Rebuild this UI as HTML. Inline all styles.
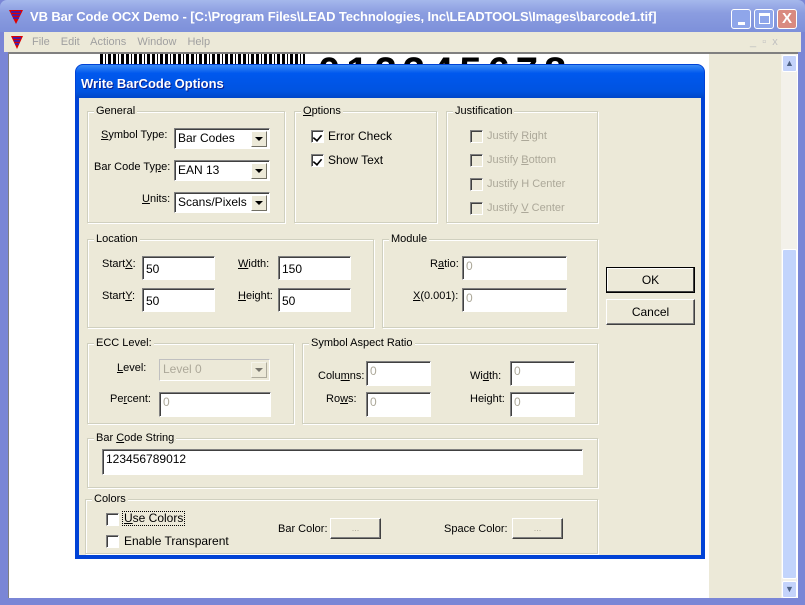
<!DOCTYPE html>
<html><head><meta charset="utf-8"><style>
*{margin:0;padding:0;box-sizing:border-box}
body{width:805px;height:605px;position:relative;overflow:hidden;background:#7a86d6;font-family:"Liberation Sans",sans-serif;font-size:11px;color:#000}
.a{position:absolute}
.grp{position:absolute;border:1px solid #d0d0bf;box-shadow:inset 1px 1px 0 #fff,1px 1px 0 #fff}
.grp>span{position:absolute;top:-8px;left:6px;background:#ece9d8;padding:0 2px;line-height:14px}
.ed{position:absolute;background:#fff;border:1px solid;border-color:#808080 #fff #fff #808080;box-shadow:inset 1px 1px 0 #404040;padding:2px 0 0 3px;line-height:14px;font-size:12px}
.dis{color:#aca899}
.lbl{position:absolute;line-height:13px;white-space:nowrap}
.cb{position:absolute;width:13px;height:13px;background:#fff;border:1px solid;border-color:#808080 #fff #fff #808080;box-shadow:inset 1px 1px 0 #404040}
.cb.d{background:#ece9d8}
.chk::after{content:"";position:absolute;left:2px;top:1px;width:5px;height:8px;border:solid #000;border-width:0 2px 2px 0;transform:rotate(40deg) scale(.8)}
.dd{position:absolute;right:2px;top:2px;width:16px;height:16px;background:#ece9d8;border:1px solid;border-color:#fff #716f64 #716f64 #fff}
.dd::after{content:"";position:absolute;left:3px;top:5px;border:4px solid transparent;border-top:4px solid #000}
.btn{position:absolute;background:#ece9d8;border:1px solid;border-color:#fff #404040 #404040 #fff;box-shadow:inset -1px -1px 0 #808080;text-align:center;font-size:12px}
u{text-decoration:underline}
</style></head><body>
<div class="a" style="left:0;top:0;width:805px;height:32px;background:linear-gradient(#a5b8ec,#8b9de0 40%,#7d90da);border-radius:7px 7px 0 0"></div>
<svg class="a" style="left:8px;top:9px" width="16" height="16"><polygon points="1,1 15,1 8,15" fill="#d00"/><path d="M3 3h10M4 6h8M5 9h6" stroke="#22c" stroke-width="1.5"/></svg>
<div class="a" style="left:30px;top:9px;color:#fff;font-size:13px;font-weight:bold;line-height:16px;white-space:nowrap;letter-spacing:-.1px">VB Bar Code OCX Demo - [C:\Program Files\LEAD Technologies, Inc\LEADTOOLS\Images\barcode1.tif]</div>
<div class="a" style="left:731px;top:9px;width:20px;height:20px;background:#8fa6ea;border:1px solid #fff;border-radius:3px"><div class="a" style="left:6px;top:12px;width:7px;height:3px;background:#fff"></div></div>
<div class="a" style="left:754px;top:9px;width:20px;height:20px;background:#8fa6ea;border:1px solid #fff;border-radius:3px"><div class="a" style="left:4px;top:3px;width:11px;height:11px;border:1px solid #fff;border-top-width:3px"></div></div>
<div class="a" style="left:777px;top:9px;width:20px;height:20px;background:#d98a80;border:1px solid #fff;border-radius:3px;color:#fff;font-weight:bold;font-size:15px;text-align:center;line-height:17px">X</div>
<div class="a" style="left:4px;top:32px;width:797px;height:20px;background:#ece9d8"></div>
<svg class="a" style="left:10px;top:35px" width="14" height="15"><polygon points="1,1 13,1 7,14" fill="#d00"/><path d="M3 3h8M4 6h6M5 9h4" stroke="#22c" stroke-width="1.5"/></svg>
<div class="a" style="left:32px;top:36px;color:#a0a0a0;font-size:11px;word-spacing:8px;white-space:nowrap">File Edit Actions Window Help</div>
<div class="a" style="left:750px;top:36px;color:#c0c0c0;font-size:11px;white-space:nowrap">_ &nbsp;▫ &nbsp;x</div>
<div class="a" style="left:8px;top:52px;width:790px;height:546px;background:#fff;border-top:2px solid #808080;border-left:1px solid #808080"></div>
<div class="a" style="left:709px;top:54px;width:72px;height:544px;background:#ece9d8"></div>
<div class="a" style="left:781px;top:54px;width:16px;height:544px;background:#f3f1ea"></div>
<div class="a" style="left:782px;top:55px;width:15px;height:17px;background:#c4d3fb;border:1px solid #fff;border-radius:2px;color:#4d6185;text-align:center;font-size:9px;line-height:15px">▲</div>
<div class="a" style="left:782px;top:249px;width:15px;height:330px;background:#c2d4fc;border:1px solid #fff;border-radius:2px"></div>
<div class="a" style="left:782px;top:581px;width:15px;height:17px;background:#c4d3fb;border:1px solid #fff;border-radius:2px;color:#4d6185;text-align:center;font-size:9px;line-height:15px">▼</div>
<div class="a" style="left:100px;top:54px;width:205px;height:14px;background:repeating-linear-gradient(90deg,#000 0 3px,#fff 3px 5px,#000 5px 6px,#fff 6px 8px,#000 8px 11px,#fff 11px 13px)"></div>
<div class="a" style="left:318px;top:54px;width:250px;height:14px;overflow:hidden"><div style="font-size:40px;font-weight:bold;line-height:40px;margin-top:-2px;letter-spacing:6px;white-space:nowrap">0123456789</div></div>
<div class="a" style="left:75px;top:64px;width:630px;height:495px;background:#0042d6;border-radius:8px 8px 0 0"></div>
<div class="a" style="left:76px;top:65px;width:628px;height:33px;background:linear-gradient(#3b8cf5,#0058ee 25%,#0053e0 80%,#0046c8);border-radius:7px 7px 0 0"></div>
<div class="a" style="left:81px;top:76px;color:#fff;font-weight:bold;font-size:13px;text-shadow:1px 1px #0a1e8c">Write BarCode Options</div>
<div class="a" style="left:79px;top:98px;width:622px;height:457px;background:#ece9d8"></div>

<div class="grp" style="left:87px;top:111px;width:198px;height:112px"><span>General</span></div>
<div class="lbl" style="left:101px;top:129px"><u>S</u>ymbol Type:</div>
<div class="ed" style="left:174px;top:128px;width:96px;height:21px">Bar Codes<div class="dd"></div></div>
<div class="lbl" style="left:94px;top:161px">Bar Code Ty<u>p</u>e:</div>
<div class="ed" style="left:174px;top:160px;width:96px;height:21px">EAN 13<div class="dd"></div></div>
<div class="lbl" style="left:142px;top:193px"><u>U</u>nits:</div>
<div class="ed" style="left:174px;top:192px;width:96px;height:21px">Scans/Pixels<div class="dd"></div></div>
<div class="grp" style="left:294px;top:111px;width:143px;height:112px"><span><u>O</u>ptions</span></div>
<div class="cb chk" style="left:311px;top:130px"></div><div class="lbl" style="left:328px;top:130px;font-size:12px">Error Check</div>
<div class="cb chk" style="left:311px;top:154px"></div><div class="lbl" style="left:328px;top:154px;font-size:12px">Show Text</div>
<div class="grp" style="left:446px;top:111px;width:152px;height:112px"><span>Justification</span></div>
<div class="cb d" style="left:470px;top:130px"></div><div class="lbl dis" style="left:487px;top:130px">Justify <u>R</u>ight</div>
<div class="cb d" style="left:470px;top:154px"></div><div class="lbl dis" style="left:487px;top:154px">Justify <u>B</u>ottom</div>
<div class="cb d" style="left:470px;top:178px"></div><div class="lbl dis" style="left:487px;top:178px">Justify H Center</div>
<div class="cb d" style="left:470px;top:202px"></div><div class="lbl dis" style="left:487px;top:202px">Justify <u>V</u> Center</div>
<div class="grp" style="left:87px;top:239px;width:287px;height:89px"><span>Location</span></div>
<div class="lbl" style="left:102px;top:258px">Start<u>X</u>:</div>
<div class="ed" style="left:142px;top:256px;width:73px;height:24px;padding-top:5px">50</div>
<div class="lbl" style="left:102px;top:290px">Start<u>Y</u>:</div>
<div class="ed" style="left:142px;top:288px;width:73px;height:24px;padding-top:5px">50</div>
<div class="lbl" style="left:238px;top:258px"><u>W</u>idth:</div>
<div class="ed" style="left:278px;top:256px;width:73px;height:24px;padding-top:5px">150</div>
<div class="lbl" style="left:238px;top:290px"><u>H</u>eight:</div>
<div class="ed" style="left:278px;top:288px;width:73px;height:24px;padding-top:5px">50</div>
<div class="grp" style="left:382px;top:239px;width:216px;height:89px"><span>Module</span></div>
<div class="lbl" style="left:430px;top:258px">R<u>a</u>tio:</div>
<div class="ed dis" style="left:462px;top:256px;width:105px;height:24px">0</div>
<div class="lbl" style="left:413px;top:290px"><u>X</u>(0.001):</div>
<div class="ed dis" style="left:462px;top:288px;width:105px;height:24px">0</div>
<div class="btn" style="left:606px;top:267px;width:89px;height:26px;border:1px solid #000;line-height:24px;box-shadow:inset -1px -1px 0 #404040,inset 1px 1px 0 #fff">OK</div>
<div class="btn" style="left:606px;top:299px;width:89px;height:26px;line-height:24px">Cancel</div>
<div class="grp" style="left:87px;top:343px;width:207px;height:81px"><span>ECC Level:</span></div>
<div class="lbl" style="left:117px;top:362px"><u>L</u>evel:</div>
<div class="ed dis" style="left:159px;top:359px;width:111px;height:22px;background:#ece9d8;box-shadow:none;border-color:#c0c0c0 #fff #fff #c0c0c0">Level 0<div class="dd" style="top:2px;height:16px;opacity:.5"></div></div>
<div class="lbl" style="left:110px;top:393px">Pe<u>r</u>cent:</div>
<div class="ed dis" style="left:159px;top:392px;width:112px;height:25px">0</div>
<div class="grp" style="left:302px;top:343px;width:296px;height:81px"><span>Symbol Aspect Ratio</span></div>
<div class="lbl" style="left:318px;top:370px">Colu<u>m</u>ns:</div>
<div class="ed dis" style="left:366px;top:361px;width:65px;height:25px">0</div>
<div class="lbl" style="left:326px;top:393px">Ro<u>w</u>s:</div>
<div class="ed dis" style="left:366px;top:392px;width:65px;height:25px">0</div>
<div class="lbl" style="left:470px;top:370px">Wi<u>d</u>th:</div>
<div class="ed dis" style="left:510px;top:361px;width:65px;height:25px">0</div>
<div class="lbl" style="left:470px;top:393px">Height:</div>
<div class="ed dis" style="left:510px;top:392px;width:65px;height:25px">0</div>
<div class="grp" style="left:87px;top:438px;width:511px;height:50px"><span>Bar <u>C</u>ode String</span></div>
<div class="ed" style="left:102px;top:449px;width:481px;height:26px">123456789012</div>
<div class="grp" style="left:85px;top:499px;width:513px;height:55px"><span>Colors</span></div>
<div class="cb" style="left:106px;top:513px"></div><div class="lbl" style="left:123px;top:512px;font-size:12px;outline:1px dotted #000;padding:0 1px"><u>U</u>se Colors</div>
<div class="cb" style="left:106px;top:535px"></div><div class="lbl" style="left:124px;top:535px;font-size:12px">Enable Transparent</div>
<div class="lbl" style="left:278px;top:523px">Bar Color:</div>
<div class="btn" style="left:330px;top:518px;width:51px;height:21px;color:#aca899;font-size:9px;line-height:18px">...</div>
<div class="lbl" style="left:444px;top:523px">Space Color:</div>
<div class="btn" style="left:512px;top:518px;width:51px;height:21px;color:#aca899;font-size:9px;line-height:18px">...</div>
</body></html>
